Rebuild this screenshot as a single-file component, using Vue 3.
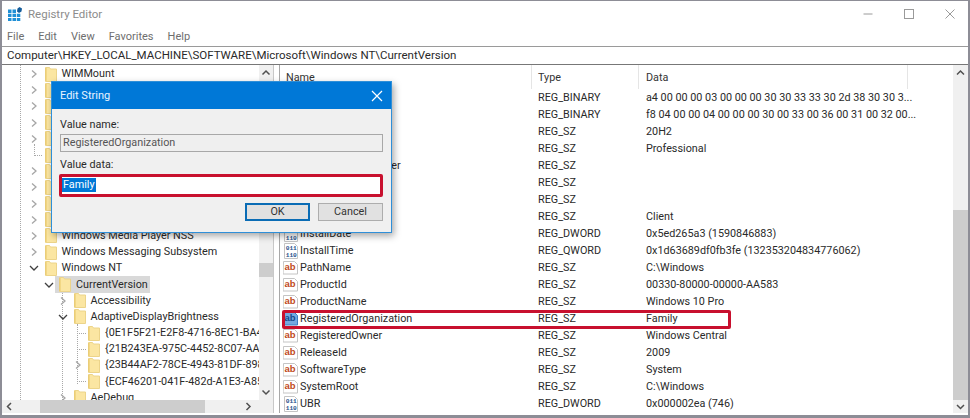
<template>
  <div class="window">
    <div class="titlebar">
      <svg class="app-icon" width="14" height="14" viewBox="0 0 14 14">
        <path fill="#1f8fd6" d="M0 2.500h3.500V6H0zM4.500 2.500H8V6H4.500zM0 6.800h3.500v3.300H0zM4.500 6.800H8v3.300H4.500zM8.800 6.800h3.500v3.300H8.800zM0 11h3.500v3H0zM4.500 11H8v3H4.500zM8.800 11h3.500v3H8.800z" />
        <path fill="#155d9c" d="M9.500 1.500 11.500 0 14 1.500 13.500 4.500 11 6 9 4.500z" />
      </svg>
      <span class="app-title">Registry Editor</span>
      <div class="win-controls">
        <svg width="12" height="12" viewBox="0 0 12 12"><path d="M1.500 6h9" stroke="#9a9a9a" /></svg>
        <svg width="12" height="12" viewBox="0 0 12 12"><rect x="1.500" y="1.500" width="9" height="9" fill="none" stroke="#9a9a9a" /></svg>
        <svg width="12" height="12" viewBox="0 0 12 12"><path d="M1.500 1.500l9 9m0-9l-9 9" stroke="#9a9a9a" /></svg>
      </div>
    </div>

    <div class="menubar">
      <span v-for="m in menus" :key="m">{{ m }}</span>
    </div>

    <div class="address">Computer\HKEY_LOCAL_MACHINE\SOFTWARE\Microsoft\Windows NT\CurrentVersion</div>

    <div class="panes">
      <div class="tree-pane">
        <div class="tree-main">
          <div class="tree-rows">
            <span v-for="g in guides" :key="g.left" class="guide-v" :style="{ left: g.left + 'px', top: g.top + 'px', height: g.height + 'px' }"></span>
            <div v-for="(row, i) in treeRows" :key="i" class="tree-row" :style="{ paddingLeft: 26 + (row.depth - 1) * 14.5 + 'px' }">
              <span class="guide-h" v-if="row.twig"></span>
              <svg class="chev" width="12" height="12" viewBox="0 0 12 12">
                <path v-if="row.arrow === 'right'" d="M4 2.500 8 6 4 9.500" fill="none" stroke="#a6a6a6" stroke-width="1.300" />
                <path v-if="row.arrow === 'down'" d="M2 4l4 4 4-4" fill="none" stroke="#404040" stroke-width="1.300" />
              </svg>
              <div class="node" :class="{ selected: row.selected }">
                <svg class="folder" width="12" height="15" viewBox="0 0 12 15">
                  <path d="M0.500 0.500h4l1 1.500h6v12.500h-11z" fill="#fbe6a2" stroke="#ecd48a" />
                  <path d="M1 1v13" stroke="#e9c766" />
                </svg>
                <span>{{ row.label }}</span>
              </div>
            </div>
          </div>
          <div class="scroll-v tree-v">
            <svg class="arrow" width="14" height="16" viewBox="0 0 14 16"><path d="M3.500 9.500 7 6l3.500 3.500" fill="none" stroke="#505050" stroke-width="1.500" /></svg>
            <div class="thumb-slot tree-slot"><div class="thumb"></div></div>
            <svg class="arrow" width="14" height="16" viewBox="0 0 14 16"><path d="M3.500 6.500 7 10l3.500-3.500" fill="none" stroke="#505050" stroke-width="1.500" /></svg>
          </div>
        </div>
        <div class="scroll-h">
          <svg class="arrow" width="14" height="13" viewBox="0 0 14 13"><path d="M9 3 5.500 6.500 9 10" fill="none" stroke="#505050" stroke-width="1.500" /></svg>
          <div class="hthumb"></div>
          <svg class="arrow right-arrow" width="14" height="13" viewBox="0 0 14 13"><path d="M5.500 3 9 6.500 5.500 10" fill="none" stroke="#505050" stroke-width="1.500" /></svg>
          <div class="corner"></div>
        </div>
      </div>

      <div class="list-pane">
        <div class="list-main">
          <div class="list-head">
            <span class="col-name">Name</span>
            <span class="col-type">Type</span>
            <span class="col-data">Data</span>
          </div>
          <div v-for="(v, i) in values" :key="i" class="list-row">
            <span class="col-name cell-name">
              <svg class="val-icon" width="16" height="16" viewBox="0 0 16 16">
                <template v-if="v.type === 'REG_SZ' || v.type === 'REG_BINARY'">
                  <path d="M0.500 1.500h11l3 3v9.500h-14.500z" :fill="v.picked ? '#74a9e0' : '#fff'" :stroke="v.picked ? '#3a7cc4' : '#c4c4c4'" />
                  <text x="1.500" y="9.500" class="ab" :fill="v.picked ? '#174a8c' : '#c04a1c'">ab</text>
                </template>
                <template v-else>
                  <path d="M1.500 0.500h10l3 3v12h-13z" fill="#fff" stroke="#c4c4c4" />
                  <text x="2.800" y="7" class="bin">011</text>
                  <text x="2.800" y="13.500" class="bin">110</text>
                </template>
              </svg>
              {{ v.name }}
            </span>
            <span class="col-type">{{ v.type }}</span>
            <span class="col-data">{{ v.data }}</span>
          </div>
          <div class="red-row"></div>
        </div>
        <div class="scroll-v list-v">
          <svg class="arrow" width="15" height="16" viewBox="0 0 15 16"><path d="M4 9.500 7.500 6 11 9.500" fill="none" stroke="#505050" stroke-width="1.500" /></svg>
          <div class="thumb-slot list-slot"><div class="thumb"></div></div>
          <svg class="arrow" width="15" height="13" viewBox="0 0 15 13"><path d="M4 5 7.500 8.500 11 5" fill="none" stroke="#505050" stroke-width="1.500" /></svg>
        </div>
      </div>
    </div>

    <div class="dialog">
      <div class="dialog-title">
        <span>Edit String</span>
        <svg width="12" height="12" viewBox="0 0 12 12"><path d="M1 1l10 10M11 1 1 11" stroke="#fff" stroke-width="1.200" /></svg>
      </div>
      <div class="dialog-body">
        <label class="field-label">Value name:</label>
        <div class="readonly-input">RegisteredOrganization</div>
        <label class="field-label data-label">Value data:</label>
        <div class="data-input"><span class="selection">Family</span></div>
        <div class="dialog-buttons">
          <button class="btn btn-default">OK</button>
          <button class="btn">Cancel</button>
        </div>
      </div>
    </div>
  </div>
</template>

<script setup>
const menus = ['File', 'Edit', 'View', 'Favorites', 'Help']

const treeRows = [
  { depth: 1, arrow: 'right', label: 'WIMMount' },
  { depth: 1, arrow: 'right', label: '' },
  { depth: 1, arrow: 'right', label: '' },
  { depth: 1, arrow: 'right', label: '' },
  { depth: 1, arrow: 'right', label: '' },
  { depth: 1, twig: true, label: '' },
  { depth: 1, arrow: 'right', label: '' },
  { depth: 1, arrow: 'right', label: '' },
  { depth: 1, arrow: 'right', label: '' },
  { depth: 1, arrow: 'right', label: '' },
  { depth: 1, arrow: 'right', label: 'Windows Media Player NSS' },
  { depth: 1, arrow: 'right', label: 'Windows Messaging Subsystem' },
  { depth: 1, arrow: 'down', label: 'Windows NT' },
  { depth: 2, arrow: 'down', label: 'CurrentVersion', selected: true },
  { depth: 3, arrow: 'right', label: 'Accessibility' },
  { depth: 3, arrow: 'down', label: 'AdaptiveDisplayBrightness' },
  { depth: 4, twig: true, label: '{0E1F5F21-E2F8-4716-8EC1-BA49' },
  { depth: 4, twig: true, label: '{21B243EA-975C-4452-8C07-AA1' },
  { depth: 4, arrow: 'right', label: '{23B44AF2-78CE-4943-81DF-8981' },
  { depth: 4, twig: true, label: '{ECF46201-041F-482d-A1E3-A853' },
  { depth: 3, arrow: 'right', label: 'AeDebug' },
]

const guides = [
  { left: 18, top: 0, height: 335 },
  { left: 32, top: 79, height: 12 },
  { left: 60, top: 228, height: 107 },
  { left: 75, top: 259, height: 60 },
]

const values = [
  { name: '', type: 'REG_BINARY', data: 'a4 00 00 00 03 00 00 00 30 30 33 33 30 2d 38 30 30 3...' },
  { name: '', type: 'REG_BINARY', data: 'f8 04 00 00 04 00 00 00 30 00 33 00 36 00 31 00 32 00...' },
  { name: '', type: 'REG_SZ', data: '20H2' },
  { name: '', type: 'REG_SZ', data: 'Professional' },
  { name: 'SystemManufacturer', type: 'REG_SZ', data: '' },
  { name: '', type: 'REG_SZ', data: '' },
  { name: '', type: 'REG_SZ', data: '' },
  { name: '', type: 'REG_SZ', data: 'Client' },
  { name: 'InstallDate', type: 'REG_DWORD', data: '0x5ed265a3 (1590846883)' },
  { name: 'InstallTime', type: 'REG_QWORD', data: '0x1d63689df0fb3fe (132353204834776062)' },
  { name: 'PathName', type: 'REG_SZ', data: 'C:\\Windows' },
  { name: 'ProductId', type: 'REG_SZ', data: '00330-80000-00000-AA583' },
  { name: 'ProductName', type: 'REG_SZ', data: 'Windows 10 Pro' },
  { name: 'RegisteredOrganization', type: 'REG_SZ', data: 'Family', picked: true },
  { name: 'RegisteredOwner', type: 'REG_SZ', data: 'Windows Central' },
  { name: 'ReleaseId', type: 'REG_SZ', data: '2009' },
  { name: 'SoftwareType', type: 'REG_SZ', data: 'System' },
  { name: 'SystemRoot', type: 'REG_SZ', data: 'C:\\Windows' },
  { name: 'UBR', type: 'REG_DWORD', data: '0x000002ea (746)' },
]
</script>

<style>
html, body {
  margin: 0;
  background: #fff;
}
</style>

<style scoped>
.window {
  position: relative;
  box-sizing: border-box;
  width: 970px;
  height: 418px;
  overflow: hidden;
  display: flex;
  flex-direction: column;
  background: #fff;
  border: solid #8d8d96;
  border-width: 1px 2px 3px 2px;
  font-family: Roboto, "Noto Sans", sans-serif;
  font-size: 10.8px;
  color: #2a2a2a;
}

.titlebar {
  height: 25px;
  display: flex;
  align-items: center;
  padding: 0 0 0 6px;
  flex-shrink: 0;
}

.app-icon {
  margin-right: 6px;
}

.app-title {
  color: #8c8c8c;
  font-size: 11.500px;
}

.win-controls {
  margin-left: auto;
  display: flex;
  gap: 29px;
  padding-right: 12px;
}

.menubar {
  height: 20px;
  display: flex;
  align-items: center;
  gap: 14px;
  padding-left: 5px;
  color: #6e6e6e;
  font-size: 11px;
  flex-shrink: 0;
}

.address {
  height: 17px;
  line-height: 16px;
  padding-left: 5px;
  border-top: 1px solid #9a9a9a;
  border-bottom: 1px solid #777;
  flex-shrink: 0;
  white-space: nowrap;
  font-size: 11.500px;
}

.panes {
  flex: 1;
  min-height: 0;
  display: flex;
  padding-bottom: 2px;
}

.tree-pane {
  width: 271px;
  display: flex;
  flex-direction: column;
  border-right: 1px solid #c8c8c8;
  flex-shrink: 0;
}

.tree-main {
  flex: 1;
  min-height: 0;
  display: flex;
}

.tree-rows {
  position: relative;
  flex: 1;
  min-width: 0;
  overflow: hidden;
  padding-top: 1px;
}

.tree-row {
  position: relative;
  box-sizing: border-box;
  height: 16.2px;
  display: flex;
  align-items: center;
  white-space: nowrap;
}

.chev {
  flex-shrink: 0;
}

.node {
  display: flex;
  align-items: center;
  gap: 5px;
  height: 16.2px;
  padding: 0 2px 0 4.5px;
  line-height: 16px;
}

.node.selected {
  background: #d9d9d9;
}

.folder {
  flex-shrink: 0;
}

.guide-v {
  position: absolute;
  width: 0;
  border-left: 1px dotted #a8a8a8;
}

.guide-h {
  position: absolute;
  width: 7px;
  margin-left: 7px;
  border-top: 1px dotted #a8a8a8;
}

.scroll-v {
  flex-shrink: 0;
  background: #f0f0f0;
  display: flex;
  flex-direction: column;
}

.tree-v {
  width: 14px;
}

.list-v {
  width: 15px;
}

.arrow {
  flex-shrink: 0;
  display: block;
}

.thumb-slot {
  flex: 1;
  min-height: 0;
  display: flex;
  flex-direction: column;
}

.thumb {
  background: #cdcdcd;
  flex: 1;
}

.tree-slot {
  padding-top: 182px;
  padding-bottom: 107px;
}

.list-slot {
  padding-top: 129px;
}

.scroll-h {
  height: 13px;
  display: flex;
  background: #f0f0f0;
  flex-shrink: 0;
}

.hthumb {
  width: 165px;
  margin-left: 24px;
  background: #cdcdcd;
}

.right-arrow {
  margin-left: 36px;
}

.corner {
  width: 14px;
  margin-left: auto;
}

.list-pane {
  flex: 1;
  min-width: 0;
  display: flex;
  margin-left: 5px;
  border-left: 1px solid #a8a8a8;
}

.list-main {
  position: relative;
  flex: 1;
  min-width: 0;
  overflow: hidden;
}

.list-head {
  height: 24px;
  display: flex;
  align-items: center;
  color: #333;
}

.list-head span {
  align-self: stretch;
  display: flex;
  align-items: center;
  border-right: 1px solid #e5e5e5;
}

.list-head .col-name {
  padding-left: 6px;
}

.list-head .col-data {
  width: 261px;
  flex: none;
}

.list-row {
  height: 17px;
  display: flex;
  align-items: center;
  white-space: nowrap;
}

.col-name {
  box-sizing: border-box;
  width: 252px;
  flex-shrink: 0;
}

.col-type {
  box-sizing: border-box;
  width: 107px;
  padding-left: 6px;
  flex-shrink: 0;
}

.col-data {
  flex: 1;
  padding-left: 7px;
}

.cell-name {
  display: flex;
  align-items: center;
  gap: 1px;
  padding-left: 3px;
}

.val-icon {
  flex-shrink: 0;
}

.ab {
  font-family: "Liberation Sans", sans-serif;
  font-size: 9.500px;
  font-weight: 700;
}

.bin {
  font-family: "Liberation Mono", monospace;
  font-size: 6.200px;
  font-weight: 700;
  fill: #27508c;
  letter-spacing: -0.1px;
}

.red-row {
  position: absolute;
  left: 2px;
  top: 245px;
  width: 443px;
  height: 13px;
  border: 3px solid #c8102e;
  border-radius: 2px;
}

.dialog {
  position: absolute;
  left: 49px;
  top: 80px;
  width: 341px;
  height: 152px;
  box-sizing: border-box;
  display: flex;
  flex-direction: column;
  border: 1px solid #2f8fd8;
  background: #f0f0f0;
  box-shadow: 2px 3px 7px rgba(0, 0, 0, 0.35);
}

.dialog-title {
  height: 27px;
  flex-shrink: 0;
  background: #0078d7;
  color: #e8f4ff;
  display: flex;
  align-items: center;
  justify-content: space-between;
  padding: 0 8px;
  font-size: 11px;
}

.dialog-body {
  position: relative;
  flex: 1;
  padding: 8px 8px 0;
  display: flex;
  flex-direction: column;
}

.field-label {
  line-height: 16px;
  height: 17px;
}

.readonly-input {
  height: 18px;
  box-sizing: border-box;
  line-height: 16px;
  border: 1px solid #a8a8a8;
  background: #efefef;
  padding-left: 2px;
  color: #555;
}

.data-label {
  margin-top: 5px;
}

.data-input {
  height: 23px;
  box-sizing: border-box;
  margin-left: -1px;
  padding-top: 1px;
  background: #fff;
  border: 3px solid #c8102e;
  border-radius: 2px;
}

.selection {
  background: #0078d7;
  color: #fff;
  display: inline-block;
  line-height: 14px;
  padding: 0 1px;
}

.dialog-buttons {
  display: flex;
  justify-content: flex-end;
  gap: 8px;
  margin-top: 6px;
}

.btn {
  width: 65px;
  height: 18px;
  box-sizing: border-box;
  padding: 0;
  font: inherit;
  line-height: 14px;
  color: #333;
  background: #e1e1e1;
  border: 1px solid #adadad;
}

.btn-default {
  border: 2px solid #0a6cb5;
}
</style>
